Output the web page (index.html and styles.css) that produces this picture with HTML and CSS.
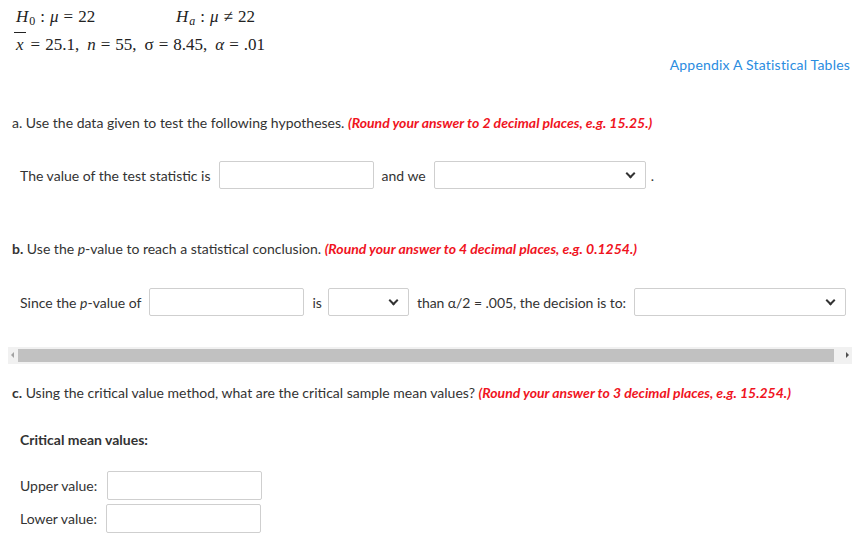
FILE: index.html
```html
<!DOCTYPE html>
<html>
<head>
<meta charset="utf-8">
<link rel="stylesheet" href="styles.css">
</head>
<body>
<div class="page">
  <div class="math">
    <div class="mrow top">
      <span class="hyp"><i>H</i><span class="sub">0</span><span class="op">:</span><i>μ</i><span class="op">=</span>22</span>
      <span class="hyp"><i>H</i><span class="sub"><i>a</i></span><span class="op">:</span><i>μ</i><span class="op">≠</span>22</span>
    </div>
    <div class="mrow second"><span class="xbar"><i>x</i></span><span class="op">=</span>25.1,<span class="sp"></span><i>n</i><span class="op">=</span>55,<span class="sp"></span>σ<span class="op">=</span>8.45,<span class="sp"></span><i>α</i><span class="op">=</span>.01</div>
  </div>
  <div class="appendix"><a href="#">Appendix A Statistical Tables</a></div>

  <p class="q qa">a. Use the data given to test the following hypotheses. <span class="red">(Round your answer to 2 decimal places, e.g. 15.25.)</span></p>

  <div class="row rowa">
    <span>The value of the test statistic is</span>
    <span class="input w155"></span>
    <span>and we</span>
    <span class="select w212"><span class="chev"></span></span>
    <span class="dot">.</span>
  </div>

  <p class="q qb"><b>b.</b> Use the <i>p</i>-value to reach a statistical conclusion. <span class="red">(Round your answer to 4 decimal places, e.g. 0.1254.)</span></p>

  <div class="row rowb">
    <span>Since the <i>p</i>-value of</span>
    <span class="input w155"></span>
    <span>is</span>
    <span class="select w81 tight"><span class="chev"></span></span>
    <span class="than">than α/2 = .005, the decision is to:</span>
    <span class="select w212"><span class="chev"></span></span>
  </div>

  <div class="scrollbar">
    <span class="arrow left"></span>
    <div class="track"><div class="thumb"></div></div>
    <span class="arrow right"></span>
  </div>

  <p class="q qc"><b>c.</b> Using the critical value method, what are the critical sample mean values? <span class="red">(Round your answer to 3 decimal places, e.g. 15.254.)</span></p>

  <div class="crit">Critical mean values:</div>

  <div class="vals">
    <div class="vrow"><span>Upper value:</span><span class="input w155"></span></div>
    <div class="vrow"><span>Lower value:</span><span class="input w155 shift"></span></div>
  </div>
</div>
</body>
</html>
```

FILE: styles.css
```css
html, body {
  margin: 0;
  padding: 0;
  background: #fff;
}
.page {
  width: 860px;
  height: 552px;
  overflow: hidden;
  font-family: Lato, "Open Sans", sans-serif;
  font-size: 14px;
  color: #333;
}
.math {
  font-family: "Liberation Serif", "DejaVu Serif", serif;
  font-size: 17px;
  color: #222;
  padding: 6px 0 0 16px;
}
.mrow {
  display: flex;
  height: 22px;
  line-height: 22px;
  align-items: center;
  white-space: nowrap;
}
.mrow.top {
  display: grid;
  grid-template-columns: 160px auto;
  justify-content: start;
}
.mrow.second {
  margin-top: 6px;
  margin-left: -2px;
}
.hyp { display: block; }
.op { display: inline-block; margin: 0 5px; }
.sp { display: inline-block; width: 8px; }
.sub { font-size: 12px; position: relative; top: 3px; margin-left: 1px; }
.xbar {
  display: inline-block;
  position: relative;
  padding: 0 2px;
  line-height: 18px;
}
.xbar::before {
  content: "";
  position: absolute;
  left: 0;
  right: 0;
  top: -4px;
  border-top: 1px solid #222;
}
.appendix {
  text-align: right;
  padding-right: 10px;
  line-height: 17px;
  height: 17px;
  letter-spacing: 0.2px;
}
.appendix a {
  color: #2a8cdf;
  text-decoration: none;
}
.q {
  margin: 0;
  padding-left: 12px;
  line-height: 17px;
  white-space: nowrap;
}
.qa { margin-top: 41px; }
.qb { margin-top: 51px; }
.qc { margin-top: 20px; }
.q b { font-weight: 700; }
.red {
  color: #f0141e;
  font-weight: 700;
  font-style: italic;
}
.row {
  display: flex;
  align-items: center;
  padding-left: 20px;
  height: 28px;
  gap: 8px;
}
.rowa { margin-top: 30px; }
.rowb { margin-top: 31px; }
.row > span { white-space: nowrap; }
.dot { margin-left: -3px; }
.tight { margin-left: -2px; }
.than { letter-spacing: -0.05px; }
.input, .select {
  display: inline-block;
  height: 28px;
  border: 1px solid #cfcfcf;
  border-radius: 2px;
  background: #fff;
  box-sizing: border-box;
  position: relative;
  flex: none;
}
.w155 { width: 155px; }
.w212 { width: 212px; }
.w81 { width: 81px; }
.chev {
  position: absolute;
  right: 11px;
  top: 8px;
  width: 5px;
  height: 5px;
  border-right: 2px solid #333;
  border-bottom: 2px solid #333;
  transform: rotate(45deg);
}
.scrollbar {
  margin: 31px 8px 0 8px;
  height: 17px;
  background: #f1f1f1;
  display: flex;
  align-items: center;
}
.arrow {
  width: 10px;
  height: 17px;
  position: relative;
  flex: none;
}
.arrow::after {
  content: "";
  position: absolute;
  top: 5px;
  border-top: 3.5px solid transparent;
  border-bottom: 3.5px solid transparent;
}
.arrow.left::after {
  left: 3px;
  border-right: 3px solid #a3a3a3;
}
.arrow.right::after {
  left: 4px;
  border-left: 3px solid #505050;
}
.track {
  flex: 1;
  height: 17px;
  display: flex;
  align-items: center;
}
.thumb {
  flex: 1;
  height: 13px;
  background: #c1c1c1;
  margin-right: 8px;
}
.crit {
  margin-top: 30px;
  padding-left: 20px;
  font-weight: 700;
  line-height: 17px;
}
.vals {
  margin-top: 23px;
  padding-left: 20px;
  display: flex;
  flex-direction: column;
  gap: 4px;
}
.vrow {
  display: flex;
  align-items: center;
  gap: 10px;
}
.vrow .input { height: 29px; }
.vrow .input.shift { margin-left: -1px; }
```
